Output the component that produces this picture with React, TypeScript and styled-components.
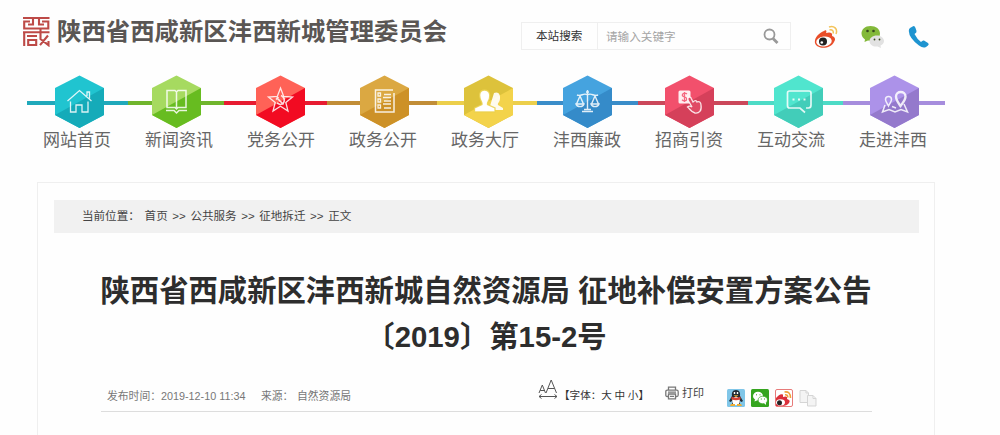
import React from "react";
import styled, {createGlobalStyle} from "styled-components";

const GlobalStyle = createGlobalStyle`
  * {
    box-sizing: border-box;
  }

  body {
    margin: 0;
    background: #fefefe;
    font-family: "Liberation Sans", "Noto Sans CJK SC", sans-serif;
    overflow: hidden;
  }
`;

const Page = styled.div`
  width: 1000px;
  height: 435px;
  overflow: hidden;
`;

const Header = styled.header`
  display: flex;
  align-items: flex-start;
  height: 75px;
  padding: 16px 0 0 23px;
`;

const SiteName = styled.h1`
  margin: 1px 0 0 7px;
  width: 464px;
  font-size: 24.4px;
  font-weight: 700;
  line-height: 30px;
  color: #5a5654;
  white-space: nowrap;
`;

const SearchBox = styled.div`
  display: flex;
  align-items: center;
  width: 270px;
  height: 28px;
  margin-top: 6px;
  padding-right: 11px;
  border: 1px solid #efefef;
`;

const SearchLabel = styled.span`
  width: 76px;
  height: 26px;
  padding-left: 14px;
  border-right: 1px solid #efefef;
  font-size: 11.6px;
  line-height: 26px;
  color: #333;
`;

const SearchHint = styled.span`
  flex: 1;
  padding-left: 8px;
  font-size: 11.6px;
  line-height: 27px;
  color: #a5a5a5;
`;

const Socials = styled.div`
  display: flex;
  gap: 23px;
  margin: 9px 0 0 23px;
`;

const NavLine = styled.div`
  display: flex;
  height: 53px;
  padding-left: 27px;
`;

const NavSegment = styled.div<{$width: number, $offset: number, $color: string}>`
  width: ${p => p.$width}px;
  padding-left: ${p => p.$offset}px;
  background: linear-gradient(${p => p.$color}, ${p => p.$color}) 0 26px / 100% 4px no-repeat;
`;

const NavLabels = styled.nav`
  display: grid;
  grid-template-columns: repeat(9, 102px);
  margin-left: 26px;
  padding-top: 1px;
  font-size: 17px;
  line-height: 24px;
  text-align: center;
  color: #666;
`;

const Panel = styled.main`
  width: 898px;
  height: 300px;
  margin: 29px 0 0 37px;
  padding: 17px 15px 0 16px;
  border: 1px solid #efefef;
`;

const Crumbs = styled.div`
  display: flex;
  gap: 4.6px;
  height: 33px;
  padding-left: 28px;
  background: #f1f1f1;
  font-size: 11.55px;
  line-height: 32px;
  color: #444;
`;

const CrumbLabel = styled.span`
  width: 58px;
`;

const Title = styled.h2`
  margin: 35px 1px 0 0;
  font-size: 29.35px;
  font-weight: 700;
  line-height: 46px;
  text-align: center;
  white-space: nowrap;
  color: #2d2d2d;
`;

const MetaBar = styled.div`
  display: flex;
  height: 52px;
  margin: 0 47px 0 47px;
  padding-left: 6px;
  border-bottom: 1px solid #ddd;
  font-size: 10.8px;
  line-height: 16px;
  color: #777;
  white-space: nowrap;
`;

const MetaText = styled.span<{$width: number}>`
  width: ${p => p.$width}px;
  margin-top: 28px;
`;

const FontSizes = styled.div`
  display: flex;
  width: 127px;
  padding-top: 19px;
  color: #333;
`;

const SizeText = styled.span`
  margin-top: 8px;
  font-size: 10.6px;
  word-spacing: -0.3px;
`;

const Print = styled.div`
  display: flex;
  align-items: center;
  gap: 3px;
  width: 62px;
  height: 16px;
  margin-top: 25px;
  font-size: 11px;
  color: #444;
`;

const Share = styled.div`
  display: flex;
  gap: 6px;
  margin-top: 29px;
`;

interface NavItem {
    name: string,
    width: number,
    offset: number,
    line: string,
    light: string,
    dark: string,
    icon: React.ReactNode
}

const items: NavItem[] = [
    {
        name: "网站首页", width: 101, offset: 28, line: "#20a9bb", light: "#20c4d0", dark: "#15abb9",
        icon: <path d="M12.5 26L24.5 15.5L36.5 26M32 21V17H34.5V23.5M15.5 26.5V37H21V30H27V37H33V26.5" />
    },
    {
        name: "新闻资讯", width: 95.5, offset: 24, line: "#70b52d", light: "#a6da60", dark: "#67bc20",
        icon: <path d="M15 15.5H23L24.5 17L26 15.5H34V32.5H26L24.5 34L23 32.5H15ZM24.5 17V34M14 35.5H22L24.5 38L27 35.5H35" strokeWidth="1.5" />
    },
    {
        name: "党务公开", width: 103.5, offset: 32, line: "#e71b31", light: "#ff6257", dark: "#f20b22",
        icon: <g>
            <path d="M24.5 13L27.7 21.5L36.5 22L29.8 27.4L32 36L24.5 31.2L17 36L19.2 27.4L12.5 22L21.3 21.5Z" />
            <path d="M25 20.5C30 23 29 29 24 29.5L21 28M20.5 22.5L27.5 29.5M20 24.5L22.5 22" strokeWidth="1.7" />
        </g>
    },
    {
        name: "政务公开", width: 109.5, offset: 33, line: "#c18d37", light: "#dba842", dark: "#cd9127",
        icon: <g>
            <path d="M33 15H15.5V37H34V18" strokeWidth="1.5" />
            <path d="M18 18H20.5V21H18ZM18 24H20.5V27H18ZM18 30H20.5V33H18ZM24 19.5H31M23 22.5H31M24 26H31M23 29H31M24 33H31" />
        </g>
    },
    {
        name: "政务大厅", width: 100, offset: 27, line: "#eccf4b", light: "#ddc23b", dark: "#f3d34b",
        icon: <g fill="#fff" stroke="none">
            <path d="M30 18C34.5 16 37 20 35.8 25C35 28 33.5 28 34 30L39 33V35H31L26 31Z" opacity=".9" />
            <path d="M20.5 15C16 15 15 19 16 23C16.5 26 18.5 27 18 29.5L10.5 33V37H31V33L23.5 29.5C23 27 25 26 25.5 23C26.5 19 25 15 20.5 15Z" stroke="#ead04b" />
        </g>
    },
    {
        name: "沣西廉政", width: 101, offset: 26, line: "#3a8dc9", light: "#45a3df", dark: "#358bc9",
        icon: <path d="M24.5 15V35M23 17H26M14 20C18 22 21 17 24.5 20C28 17 31 22 35 20M17 21L13.5 29M17 21L20.5 29M13 29C14 32.5 20 32.5 21 29ZM32 21L28.5 29M32 21L35.5 29M28 29C29 32.5 35 32.5 36 29ZM19 36.5H30M21 34.5H28" strokeWidth="1.4" />
    },
    {
        name: "招商引资", width: 110, offset: 27, line: "#cb485b", light: "#f2506c", dark: "#d5405a",
        icon: <g>
            <rect x="13.5" y="15.5" width="12" height="13" rx="1.5" fill="#fff" stroke="none" opacity=".9" />
            <path d="M22 19C20 17.5 17 18.3 17.3 20.3C17.8 22.3 21.7 21.7 21.8 24C21.7 26.3 18.5 26.3 17 24.8M19.5 17V27" stroke="#f2506c" />
            <path d="M23 23C24 21.5 26 22 26.5 24L28 27C30 25 31.5 25.5 32 27C34 26 36 27 36 30C37 36 34 38.5 30 38C26 37 25 34 22.5 32C24 30.5 25.5 31 27 32L23 25Z" fill="#e04a64" />
        </g>
    },
    {
        name: "互动交流", width: 95.5, offset: 26.5, line: "#4ddbc6", light: "#50e5ce", dark: "#42cdb9",
        icon: <g>
            <path d="M32 33H34.5Q37 33 37 30V18Q37 16 35 16H15.5Q13.5 16 13.5 18V30.5Q13.5 33 15.5 33H26L31 37.5" strokeWidth="1.7" />
            <path d="M18.5 24.5H20.5M24 24.5H26M29.5 24.5H31.5" strokeWidth="2.2" />
        </g>
    },
    {
        name: "走进沣西", width: 101.5, offset: 26.5, line: "#a68ddd", light: "#ac92e9", dark: "#9479cc",
        icon: <g>
            <path d="M30.5 31C28 27.5 26 25 26 21.5C26 15.5 35.5 15.5 35.5 21.5C35.5 25 33 27.5 30.5 31Z" strokeWidth="2.4" />
            <path d="M18.5 31C17 28 15.5 26.5 15.5 24.5C15.5 20.5 21.5 20.5 21.5 24.5C21.5 26.5 20 28 18.5 31ZM15 30L12.5 37L19 34.5L25 37L31 34.5L37.5 37L34 29M22 31.5L26 33" strokeWidth="1.5" />
        </g>
    },
];

const Hexagon: React.FC<{item: NavItem}> = ({item}) => (
    <svg width="49" height="53" viewBox="0 0 49 53">
        <path d="M24.5 .5L49 13V40L24.5 53L0 40V13Z" fill={item.light} />
        <path d="M0 40L49 13V40L24.5 53Z" fill={item.dark} />
        <g fill="none" stroke="#fff" strokeOpacity=".85" strokeWidth="1.3">{item.icon}</g>
    </svg>
);

const Seal = () => (
    <svg width="27" height="31" viewBox="0 0 27 31" fill="none" stroke="#bd4a47" strokeWidth="2.1">
        <path d="M0 2H26.5M10 2V8.5H5M16 2V8.5H21M7 5.5H1.2V12.5H25.3V5.5H19" />
        <path d="M0 16.2H26.5M1.2 16V30M4 20H14M5.2 24H13.2V29H5.2ZM17.5 13V23L25.5 29.2V25M25 19.5L17 29.2" />
    </svg>
);

const SearchIcon = () => (
    <svg width="16" height="17" viewBox="0 0 16 17" fill="none" stroke="#999">
        <circle cx="6.5" cy="6.5" r="5" strokeWidth="1.8" />
        <path d="M10 10.5L14.5 15" strokeWidth="2.8" />
    </svg>
);

const WeiboIcon = () => (
    <svg width="24" height="24" viewBox="0 0 24 24">
        <path d="M10 6C12 4 13 6 12 8C15 7 19 7 18 11C21 12 22 14 20 17C17 24 3 25 1 18C0 13 5 8 10 6Z" fill="#e94e2a" />
        <ellipse cx="10" cy="16.5" rx="7.8" ry="5" fill="#fff" transform="rotate(-8 10 16.5)" />
        <circle cx="9" cy="16.5" r="4" fill="#222" />
        <circle cx="7.8" cy="17.5" r="1.3" fill="#fff" />
        <path d="M15 2C20 0 24 4 22 9M15.5 5C18 4 20 6 19 8.5" fill="none" stroke="#f3c35a" strokeWidth="1.5" />
    </svg>
);

const WechatIcon = () => (
    <svg width="24" height="24" viewBox="0 0 24 24">
        <path d="M9.5 1C4 1 .5 4.5 .5 8.5C.5 11 2 13 4 14.5L3.5 17L7 15.5C14 17 19 13 19 8.5C19 4 15 1 9.5 1Z" fill="#83b93a" />
        <path d="M16 10.5C11.5 10.5 8.5 13 8.5 16C8.5 19.5 12 22 16.5 21.5L20 23L19.5 20.5C21.5 19.5 23 18 23 16C23 13 20 10.5 16 10.5Z" fill="#e2e2e2" />
        <g fill="#38491f">
            <circle cx="6.5" cy="6" r="1.3" />
            <circle cx="12.5" cy="6" r="1.3" />
            <circle cx="13.5" cy="14.5" r=".9" />
            <circle cx="18.5" cy="14.5" r=".9" />
        </g>
    </svg>
);

const PhoneIcon = () => (
    <svg width="24" height="24" viewBox="0 0 24 24">
        <path d="M2 3L5.5 1Q7 1 7.5 3L8.5 6Q9 7.5 6.5 9Q9 14 13 17Q14.5 15 16 15.5L20 18Q21.5 19 20 20.5L18 22Q15 23.5 11 20.5Q1 13 .8 6Q.7 4 2 3Z" fill="#1e94d0" />
    </svg>
);

const LetterSizeIcon = () => (
    <svg width="21" height="22" viewBox="0 0 21 22" fill="none" stroke="#555">
        <path d="M1 14L4.3 6L7.5 14M2.2 11.5H6.4M8 14L13.2 1L18.5 14M10 9.5H16.5M1 17.5H19M3.5 15.5L1 17.5L3.5 19.5M16.5 15.5L19 17.5L16.5 19.5" />
    </svg>
);

const PrintIcon = () => (
    <svg width="14" height="14" viewBox="0 0 14 14" fill="none" stroke="#777" strokeWidth="1.3">
        <path d="M3.5 4V1.2H10.5V4M3 10.5H2.2Q.8 10.5 .8 9V5.7Q.8 4.2 2.3 4.2H11.7Q13.2 4.2 13.2 5.7V9Q13.2 10.5 11.8 10.5H11M3.5 8H10.5V12.8H3.5ZM5 10.4H9M3 6.1H11" />
    </svg>
);

const QQShare = () => (
    <svg width="18" height="18" viewBox="0 0 18 18">
        <rect width="18" height="18" rx="1.5" fill="#80c6e8" />
        <path d="M9 1C5.5 1 4.5 4 5 7L2 12L3.5 13L5 12L5 15H13V12L14.5 13L16 12L13 7C13.5 4 12.5 1 9 1Z" fill="#222c35" />
        <ellipse cx="9" cy="12" rx="3.8" ry="4" fill="#fff" />
        <path d="M4.5 7.5Q9 10 13.5 7.5V10.2Q9 12.4 4.5 10.2Z" fill="#d94336" />
        <path d="M6.5 6.2H11.5L9 8ZM4 15H8V17H3ZM10 15H14L15 17H10Z" fill="#efad32" />
        <path d="M7.5 3V5M10.5 3V5" stroke="#fff" strokeWidth="1.4" />
    </svg>
);

const WechatShare = () => (
    <svg width="18" height="18" viewBox="0 0 18 18">
        <rect width="18" height="18" rx="1.5" fill="#35a51f" />
        <ellipse cx="7" cy="7" rx="5" ry="4.3" fill="#fff" />
        <path d="M4 10L3.5 12.5L7 11Z" fill="#fff" />
        <ellipse cx="11.8" cy="11" rx="4.7" ry="3.8" fill="#fff" stroke="#35a51f" strokeWidth=".7" />
        <path d="M13 14L15 16V13Z" fill="#fff" />
        <path d="M5 5.8H6M8.5 5.8H9.5M9.8 10H10.8M13 10H14" stroke="#35a51f" />
    </svg>
);

const WeiboShare = () => (
    <svg width="18" height="18" viewBox="0 0 18 18">
        <rect x=".5" y=".5" width="17" height="17" rx="1.5" fill="#fff" stroke="#e77b7a" />
        <path d="M1 9Q5 4 8 5.5L8 8Q13 6.5 12 10Q16 11 14 14Q12 17 7 17H1Z" fill="#db303b" />
        <ellipse cx="5.5" cy="13.4" rx="4.5" ry="3.1" fill="#fff" />
        <circle cx="4.5" cy="13.7" r="2.5" fill="#222" />
        <path d="M9.5 3Q15.5 2 15.5 9M10 5.8Q13 5.5 12.8 8.5" fill="none" stroke="#f0a23b" strokeWidth="1.6" />
    </svg>
);

const CopyShare = () => (
    <svg width="18" height="18" viewBox="0 0 18 18" fill="#f4f4f4" stroke="#d5d5d5">
        <path d="M1 1.5H7L9.5 4V13.5H1ZM7 1.5V4H9.5" />
        <path d="M8.5 6.5H14L17 9.5V17H8.5ZM14 6.5V9.5H17" />
    </svg>
);

export default function App() {
    return (<>
        <GlobalStyle />
        <Page>
            <Header>
                <Seal />
                <SiteName>陕西省西咸新区沣西新城管理委员会</SiteName>
                <SearchBox>
                    <SearchLabel>本站搜索</SearchLabel>
                    <SearchHint>请输入关键字</SearchHint>
                    <SearchIcon />
                </SearchBox>
                <Socials>
                    <WeiboIcon />
                    <WechatIcon />
                    <PhoneIcon />
                </Socials>
            </Header>
            <NavLine>
                {items.map(item => (
                    <NavSegment key={item.name} $width={item.width} $offset={item.offset} $color={item.line}>
                        <Hexagon item={item} />
                    </NavSegment>
                ))}
            </NavLine>
            <NavLabels>
                {items.map(item => <span key={item.name}>{item.name}</span>)}
            </NavLabels>
            <Panel>
                <Crumbs>
                    <CrumbLabel>当前位置：</CrumbLabel>
                    <span>首页</span>
                    <span>&gt;&gt;</span>
                    <span>公共服务</span>
                    <span>&gt;&gt;</span>
                    <span>征地拆迁</span>
                    <span>&gt;&gt;</span>
                    <span>正文</span>
                </Crumbs>
                <Title>
                    陕西省西咸新区沣西新城自然资源局 征地补偿安置方案公告<br />
                    〔2019〕第15-2号
                </Title>
                <MetaBar>
                    <MetaText $width={154}>发布时间：2019-12-10 11:34</MetaText>
                    <MetaText $width={36}>来源：</MetaText>
                    <MetaText $width={241}>自然资源局</MetaText>
                    <FontSizes>
                        <LetterSizeIcon />
                        <SizeText>【字体：大 中 小】</SizeText>
                    </FontSizes>
                    <Print>
                        <PrintIcon />
                        打印
                    </Print>
                    <Share>
                        <QQShare />
                        <WechatShare />
                        <WeiboShare />
                        <CopyShare />
                    </Share>
                </MetaBar>
            </Panel>
        </Page>
    </>)
}
